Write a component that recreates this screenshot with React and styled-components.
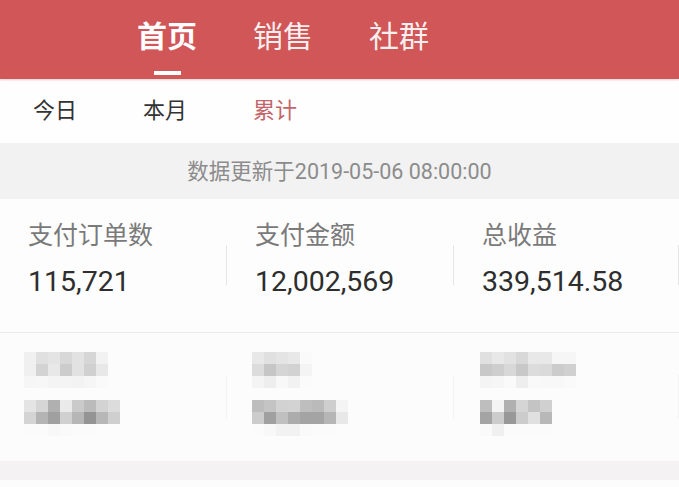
import React from "react";
import styled, { createGlobalStyle } from "styled-components";

const GlobalStyle = createGlobalStyle`
  html, body {
    margin: 0;
    padding: 0;
    background: #fdfcfd;
  }
  body {
    font-family: Roboto, "Noto Sans CJK SC", sans-serif;
  }
`;

const Page = styled.div`
  width: 679px;
  min-height: 487px;
  background: #fdfcfd;
  overflow: hidden;
`;

const Header = styled.div`
  height: 79px;
  box-sizing: border-box;
  background: #d15658;
  display: flex;
  padding-left: 137px;
  gap: 56px;
  box-shadow: 0 1px 2px rgba(160, 60, 60, 0.25);
  position: relative;
  z-index: 1;
`;

const Tab = styled.div`
  display: flex;
  flex-direction: column;
  align-items: center;
  padding-top: 22px;
  box-sizing: border-box;
  width: 60px;
  font-size: 30px;
  line-height: 30px;
  color: ${p => (p.$active ? "#ffffff" : "rgba(255,255,255,0.92)")};
  font-weight: ${p => (p.$active ? 700 : 400)};
  white-space: nowrap;

  &::after {
    content: "";
    display: block;
    width: 27px;
    height: 4px;
    margin-top: 19px;
    background: ${p => (p.$active ? "#ffffff" : "transparent")};
  }
`;

const SubTabs = styled.div`
  height: 64px;
  background: #fefefe;
  display: flex;
  padding-left: 33px;
  gap: 66px;
`;

const SubTab = styled.div`
  width: 44px;
  font-size: 22px;
  line-height: 64px;
  white-space: nowrap;
  color: ${p => (p.$active ? "#c2666b" : "#333333")};
`;

const UpdateBar = styled.div`
  height: 56px;
  background: #f2f2f2;
  text-align: center;
  font-size: 21.5px;
  line-height: 58px;
  color: #8c8c8c;
  white-space: nowrap;
`;

const StatsRow = styled.div`
  height: 133px;
  background: #fdfdfd;
  border-bottom: 1px solid #ebe9ea;
  display: grid;
  grid-template-columns: 227px 227px 225px;
`;

const StatCell = styled.div`
  display: flex;
`;

const StatBody = styled.div`
  flex: 1;
  padding: 22px 0 0 28px;
`;

const StatLabel = styled.div`
  font-size: 25px;
  line-height: 30px;
  color: #7a7a7a;
  white-space: nowrap;
`;

const StatValue = styled.div`
  margin-top: 14px;
  font-size: 28.5px;
  line-height: 34px;
  color: #2e2e2e;
  white-space: nowrap;
`;

const Divider = styled.div`
  width: 1px;
  height: ${p => p.$h}px;
  margin-top: ${p => p.$top}px;
  background: ${p => p.$color};
`;

const BlurRow = styled.div`
  height: 128px;
  display: grid;
  grid-template-columns: 227px 227px 225px;
`;

const BlurCell = styled.div`
  display: flex;
`;

const BlurBody = styled.div`
  flex: 1;
  padding: 19px 0 0 ${p => p.$left}px;
`;

const FooterBand = styled.div`
  height: 19px;
  background: #f4f2f3;
`;

const Mosaic = ({ rows }) => {
  const cell = 12;
  const grid = rows.map(r => (r ? r.split(" ") : []));
  const cols = Math.max(...grid.map(r => r.length));
  return (
    <svg width={cols * cell} height={grid.length * cell} style={{ display: "block" }}>
      {grid.map((r, y) =>
        r.map((c, x) =>
          c === "-" ? null : (
            <rect
              key={`${x}-${y}`}
              x={x * cell}
              y={y * cell}
              width={cell}
              height={cell}
              fill={`#${c}${c}${c}`}
            />
          )
        )
      )}
    </svg>
  );
};

const stats = [
  { label: "支付订单数", value: "115,721" },
  { label: "支付金额", value: "12,002,569" },
  { label: "总收益", value: "339,514.58" },
];

const blurred = [
  {
    left: 24,
    rows: [
      "f0 e0 e4 d8 e2 d6 f2",
      "f0 d3 e8 cc e2 d0 e8",
      "f6 f7 f4 f4 f3 f6 fa",
      "",
      "e4 d6 b0 ea ca bb d3 dc",
      "d4 b4 a0 d0 b6 94 b7 cf",
      "fb fb f8 fa fb fb fc fc",
    ],
  },
  {
    left: 25,
    rows: [
      "e8 e0 e4 e8 fa",
      "dc c6 d5 d2 f4",
      "f4 ee f8 f2 fb",
      "",
      "bd c4 d2 d3 be ba ce f4",
      "cc a0 c0 ac a4 a4 b6 e8",
      "fb f8 f2 f2 fa fb fb fc",
    ],
  },
  {
    left: 26,
    rows: [
      "e0 e8 e2 d8 e8 e8 f6 f6",
      "c8 ce d8 c8 dc da cc d0",
      "f4 f6 fa ee f9 f8 f8 fa",
      "",
      "be f4 b0 d5 c4 d0",
      "a4 cc 98 cc e0 b8",
      "fa f0 fb fb fb fb",
    ],
  },
];

export default function App() {
  return (
    <Page>
      <GlobalStyle />
      <Header>
        <Tab $active>首页</Tab>
        <Tab>销售</Tab>
        <Tab>社群</Tab>
      </Header>
      <SubTabs>
        <SubTab>今日</SubTab>
        <SubTab>本月</SubTab>
        <SubTab $active>累计</SubTab>
      </SubTabs>
      <UpdateBar>数据更新于2019-05-06 08:00:00</UpdateBar>
      <StatsRow>
        {stats.map(s => (
          <StatCell key={s.label}>
            <StatBody>
              <StatLabel>{s.label}</StatLabel>
              <StatValue>{s.value}</StatValue>
            </StatBody>
            <Divider $h={40} $top={46} $color="#e6e6e6" />
          </StatCell>
        ))}
      </StatsRow>
      <BlurRow>
        {blurred.map((b, i) => (
          <BlurCell key={i}>
            <BlurBody $left={b.left}>
              <Mosaic rows={b.rows} />
            </BlurBody>
            <Divider $h={44} $top={42} $color="#f5f4f5" />
          </BlurCell>
        ))}
      </BlurRow>
      <FooterBand />
    </Page>
  );
}
